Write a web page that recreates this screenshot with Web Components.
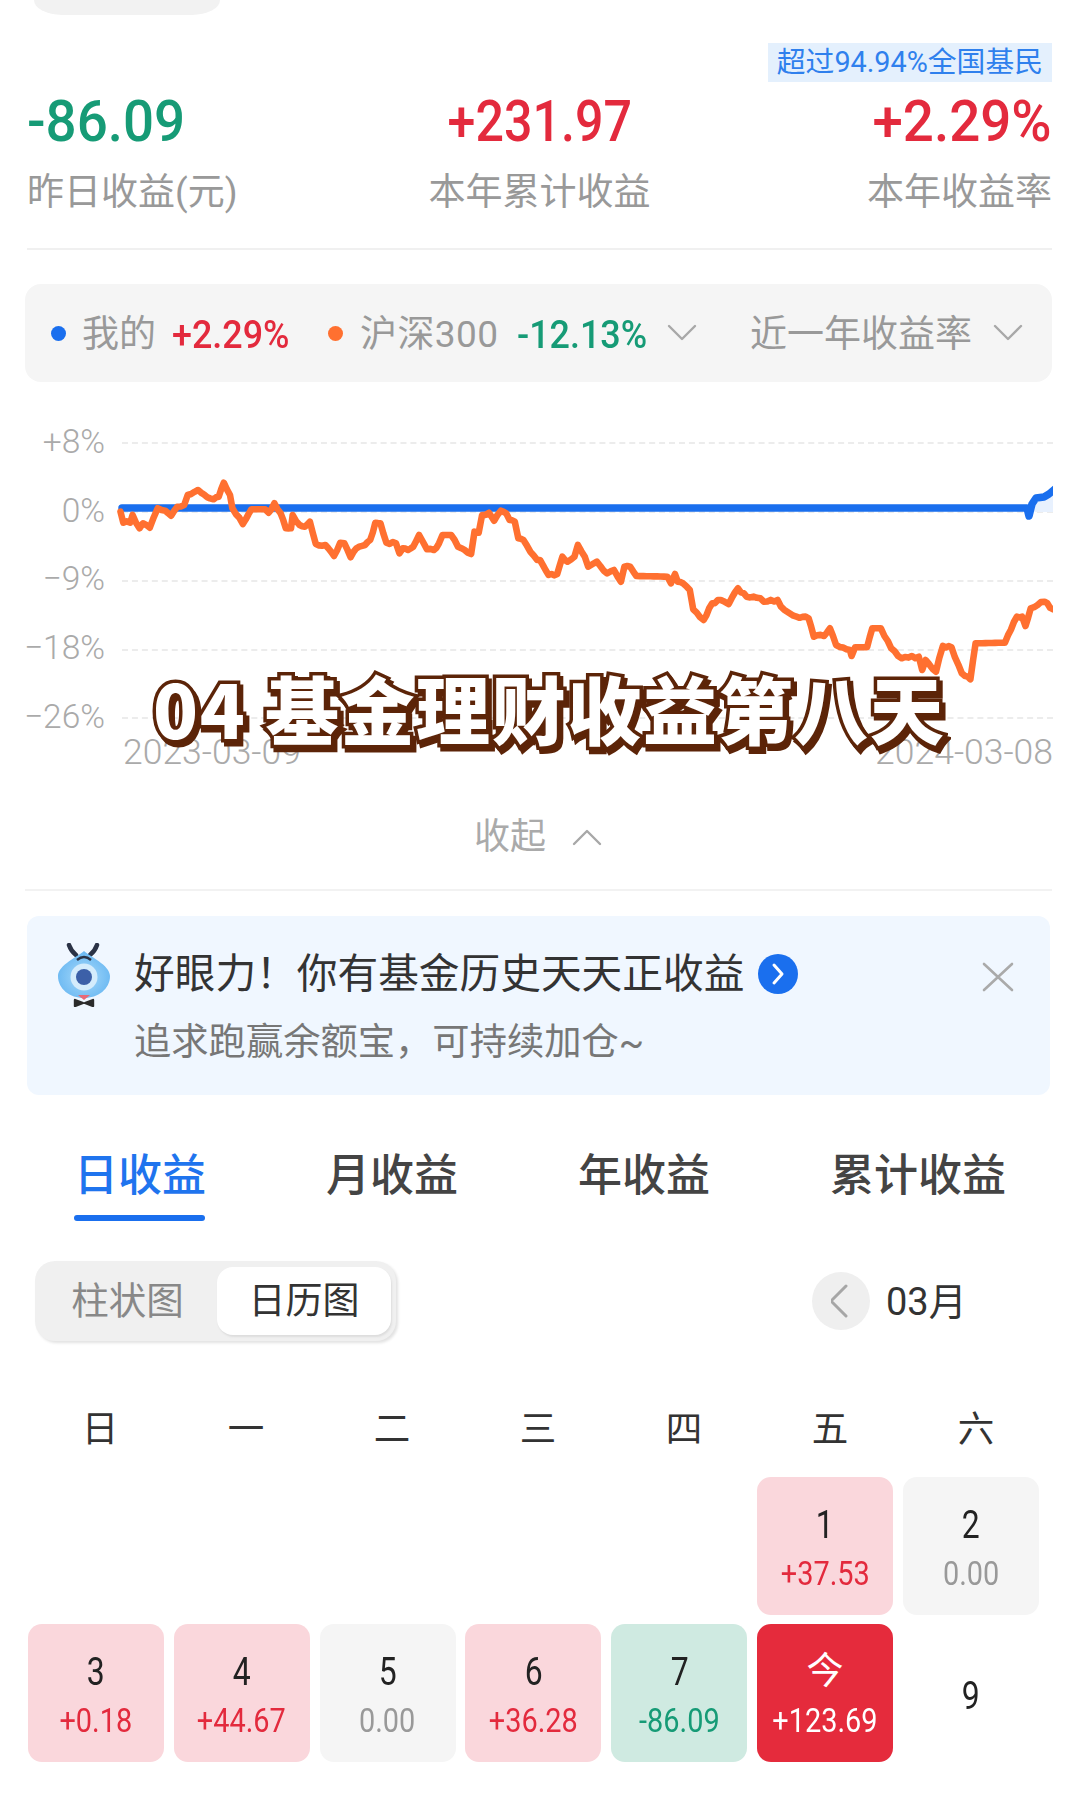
<!DOCTYPE html>
<html lang="zh-CN"><head><meta charset="utf-8"><title>基金理财收益</title>
<style>
html,body{margin:0;padding:0;background:#fff}
body{font-family:Roboto,"Noto Sans CJK SC",sans-serif;width:1080px;height:1800px;overflow:hidden;position:relative}
</style></head><body>
<fund-page></fund-page>
<script>
function def(name,css,html){
  customElements.define(name,class extends HTMLElement{
    connectedCallback(){
      if(this.shadowRoot)return;
      const r=this.attachShadow({mode:'open'});
      r.innerHTML='<style>'+css+'</style>'+(typeof html==='function'?html(this):html);
    }
  });
}
def('top-pill',`:host{display:block;width:186px;height:15px;margin-left:34px;background:#f2f2f2;border-radius:0 0 28px 28px / 0 0 15px 15px}`,'');
def('rank-badge',`:host{display:block;width:max-content;margin-left:auto;height:39px;line-height:39px;padding:0 9px;background:#e4f0fd;color:#2f80ed;font-size:28.8px;white-space:nowrap}`,'<slot></slot>');
def('stat-item',`:host{display:flex;flex-direction:column;align-items:var(--a,flex-start)}
.v{font-size:57px;font-weight:500;line-height:62px;height:62px;white-space:nowrap;transform:scaleX(var(--sx,.9));transform-origin:var(--o,left) center;margin-top:1px}
.l{font-size:37px;line-height:50px;margin-top:15px;color:#999;white-space:nowrap}`,
 e=>`<div class="v" style="color:${e.getAttribute('color')}">${e.getAttribute('value')}</div><div class="l">${e.getAttribute('label')}</div>`);
def('stat-summary',`:host{display:block;padding:28px 28px 0 27px;box-sizing:border-box;height:235px}
.row{display:grid;grid-template-columns:1fr 1fr 1fr;margin-top:8px}
.rule{height:2px;background:#f0f0f0;margin:30px 0 0}`,
`<slot name="badge"></slot><div class="row"><slot></slot></div><div class="rule"></div>`);
const chev=(w,h,up)=>`<svg width="${w}" height="${h}" viewBox="0 0 30 18" fill="none" stroke="#a8a8a8" stroke-width="2.4" stroke-linecap="round" stroke-linejoin="round"><path d="${up?'M2 16 15 3 28 16':'M2 2 15 15 28 2'}"/></svg>`;
def('legend-bar',`:host{display:flex;align-items:center;height:98px;margin:34px 28px 0 25px;background:#f5f5f5;border-radius:16px;font-size:37px;color:#999;white-space:nowrap;position:relative}
.dot{width:15px;height:15px;border-radius:50%;flex:none}
b{font-weight:500;font-size:39px;transform:scaleX(.92);transform-origin:left center;display:block;margin-top:3px}
span{display:block;margin-bottom:4px}
span.ic{margin-bottom:0;display:flex}`,
`<div class="dot" style="background:#1a6fee;margin-left:26px"></div><span style="margin-left:16px;width:72px">我的</span><b style="margin-left:18px;color:#e32a3d;width:117px">+2.29%</b><div class="dot" style="background:#ff7030;margin-left:39px"></div><span style="margin-left:17px;width:140px;letter-spacing:.4px">沪深300</span><b style="margin-left:17px;color:#169b76;width:129px">-12.13%</b><span class="ic" style="margin-left:21px">${chev(30,18)}</span><span style="margin-left:53px;width:223px">近一年收益率</span><span class="ic" style="margin-left:20px">${chev(30,18)}</span>`);
const z2=[[350,335],[358,368],[378,368],[385,345],[405,385],[415,370],[435,383],[458,325],[480,332],[497,347],[515,320],[535,315],[545,285],[575,270],[610,295],[620,298],[635,290],[650,248],[668,285],[675,325],[705,372],[730,328],[770,328],[780,338],[797,310],[815,340],[830,385],[845,385],[850,345],[870,375],[885,380],[900,365],[917,432],[945,435],[970,468],[988,428],[1000,430],[1018,472],[1035,445],[1060,435],[1075,420],[1090,368],[1105,370],[1122,428],[1150,430],[1160,460],[1170,445],[1185,450],[1200,440],[1217,405],[1240,448],[1260,450],[1275,430],[1285,405],[1310,405],[1330,440],[1368,462],[1378,395],[1390,398],[1400,345],[1420,338],[1435,362],[1455,332],[1470,340],[1480,360],[1495,365],[1505,415],[1520,420],[1540,455],[1560,480]];
const z3=[[0,480],[25,525],[50,522],[65,470],[80,485],[100,470],[110,435],[130,470],[140,500],[165,485],[195,520],[215,510],[235,545],[245,500],[262,500],[280,528],[370,530],[380,550],[392,522],[400,545],[415,550],[435,570],[445,628],[475,660],[500,610],[525,600],[548,612],[575,565],[600,590],[640,595],[650,605],[690,600],[700,620],[745,650],[780,655],[795,710],[825,708],[842,685],[860,735],[900,750],[905,768],[915,742],[950,742],[965,685],[990,685],[1020,745],[1050,775],[1100,770],[1110,810],[1120,780],[1150,815],[1170,738],[1195,742],[1225,820],[1250,838],[1265,730],[1350,728],[1385,650],[1400,650],[1410,678],[1425,625],[1465,605],[1490,628]];
const pts=z2.map(p=>[p[0]/2.904,p[1]/3+400]).concat(z3.map(p=>[540+p[0]/2.904,p[1]/3+400]));
/* daily series: fill the sketched points with small deterministic jitter on non-flat stretches */
let seed=7;const rnd=()=>{seed=(seed*16807)%2147483647;return seed/2147483647-.5};
let orange='';
pts.forEach((p,i)=>{
  if(!i){orange='M'+p[0].toFixed(1)+' '+p[1].toFixed(1);return}
  const q=pts[i-1],dx=p[0]-q[0],dy=p[1]-q[1],flat=Math.abs(dy)<Math.abs(dx)*.06&&dx>8;
  const n=Math.max(1,Math.round(dx/3.4));
  for(let k=1;k<=n;k++){
    const t=k/n,j=(flat||k===n)?0:rnd()*2.6;
    orange+='L'+(q[0]+dx*t).toFixed(1)+' '+(q[1]+dy*t+j).toFixed(1);
  }
});
def('grid-row',`:host{display:flex;align-items:center;height:68.75px}
.t{width:105px;text-align:right;font-size:33.5px;line-height:40px;margin-top:-3px;color:#aaa;white-space:nowrap;font-weight:300}
.d{flex:1;margin-left:17px;border-top:2px dashed #ececec}`,
 e=>`<div class="t">${e.getAttribute('label').replace('-','−')}</div><div class="d"></div>`);
def('return-chart',`:host{display:block;position:relative;margin:27px 27px 0 0;height:362px}
.dates{display:flex;justify-content:space-between;margin:-19px 0 0 123px;font-size:35.5px;line-height:36px;color:#aaa;font-weight:300}
svg{position:absolute;left:0;top:0;pointer-events:none}`,
`<slot></slot><div class="dates"><span>2023-03-09</span><span>2024-03-08</span></div>
<svg width="1053" height="380" viewBox="0 409 1053 380" fill="none" stroke-linecap="round" stroke-linejoin="round">
<path d="M1032 503 1053 490V512H1032Z" fill="#e8f1fe"/>
<path d="M122 508H1027L1029 516 1032 504 1036 498 1044 497 1049 494 1056 488" stroke="#1a6fee" stroke-width="7.5"/>
<path d="${orange}" stroke="#ff7030" stroke-width="6.6"/></svg>`);
def('video-caption',`:host{position:absolute;left:153px;top:662px;font-family:"Noto Sans CJK SC",sans-serif;font-weight:900;font-size:74px;line-height:90px;letter-spacing:1.6px;color:#fff;white-space:nowrap;-webkit-text-stroke:7px #5c2408;paint-order:stroke fill;filter:drop-shadow(3px 4px 0 #5c2408);z-index:3}`,'<slot></slot>');
def('collapse-row',`:host{display:flex;justify-content:center;align-items:center;height:60px;margin-top:36px;font-size:36px;color:#aaa;gap:26px}`,`<span style="white-space:nowrap;line-height:60px;margin-left:-4px">收起</span>${chev(30,18,true)}`);
def('thin-rule',`:host{display:block;height:2px;background:#f2f2f2;margin:22px 28px 0 25px}`,'');
def('tip-banner',`:host{display:block;position:relative;height:179px;margin:25px 30px 0 27px;background:#f0f7ff;border-radius:12px}
.c{display:flex;padding:32px 0 0 29px}
.a{font-size:40.7px;line-height:52px;color:#333;display:flex;align-items:center;white-space:nowrap}
.b{font-size:37.3px;line-height:52px;color:#777;margin-top:16px;white-space:nowrap}
.go{width:40px;height:40px;border-radius:50%;background:#1a6fee;margin-left:14px;display:flex;align-items:center;justify-content:center}
.x{position:absolute;right:36px;top:46px;display:flex}`,
`<div class="c"><svg width="56" height="64" viewBox="0 0 56 64" style="flex:none;margin-top:-5px"><defs><radialGradient id="g" cx=".5" cy=".55" r=".55"><stop offset="0" stop-color="#a8dafa"/><stop offset="1" stop-color="#6ab8f2"/></radialGradient></defs>
<path d="M13 2Q15 8 20 12M41 2Q39 8 34 12" stroke="#2b3346" stroke-width="4.5" stroke-linecap="round" fill="none"/>
<path d="M28 8C33 13 54 22 54 33 54 46 42 55 28 55 14 55 2 46 2 33 2 22 23 13 28 8Z" fill="url(#g)"/>
<path d="M21 17Q28 11 35 17" stroke="#2b3346" stroke-width="2.4" fill="none"/>
<circle cx="28" cy="34" r="13.5" fill="#d4ecfc"/><circle cx="28" cy="34" r="8" fill="#3c60a8"/>
<path d="M22 52H34L28 57Z" fill="#e86a78"/>
<path d="M19 57 27 60 19 63ZM37 57 29 60 37 63Z" fill="#2b2b2b" stroke="#2b2b2b" stroke-width="2.4" stroke-linejoin="round"/></svg>
<div style="margin-left:22px"><div class="a">好眼力！你有基金历史天天正收益<span class="go"><svg width="14" height="24" viewBox="0 0 14 24" fill="none" stroke="#fff" stroke-width="3" stroke-linecap="round" stroke-linejoin="round"><path d="M3 3 11 12 3 21"/></svg></span></div><div class="b">追求跑赢余额宝，可持续加仓~</div></div></div>
<span class="x"><svg width="32" height="30" viewBox="0 0 32 30" stroke="#aaa" stroke-width="2.6" stroke-linecap="round"><path d="M2 2 30 28M30 2 2 28"/></svg></span>`);
def('period-tabs',`:host{display:block;height:126px;font-size:44px;font-weight:500;color:#444;position:relative}
.r{display:flex;padding-top:50px;height:62px;line-height:62px;white-space:nowrap}
.r span:nth-child(1){margin-left:74px;color:#1f74ee;width:132px}
.r span:nth-child(2){margin-left:120px;width:132px}
.r span:nth-child(3){margin-left:120px;width:132px}
.r span:nth-child(4){margin-left:120px}
i{display:block;width:131px;height:6px;border-radius:3px;background:#1a6fee;margin:8px 0 0 74px}`,
`<div class="r"><span>日收益</span><span>月收益</span><span>年收益</span><span>累计收益</span></div><i></i>`);
def('view-bar',`:host{display:flex;align-items:center;height:80px;margin-top:40px;position:relative}
.sw{display:flex;align-items:center;width:361px;height:80px;box-sizing:border-box;margin-left:35px;padding:6px 5px 6px 0;background:#f0f0f0;border-radius:20px;box-shadow:2px 2px 3px #e2e2e2;font-size:37.5px;color:#888;white-space:nowrap;line-height:67px}
.sw span{display:block;width:182px;text-align:center;padding-left:3px;box-sizing:border-box}
.sw b{display:block;flex:1;height:100%;font-size:37px;font-weight:400;line-height:69px;text-align:center;background:#fff;border-radius:16px;color:#333;box-shadow:1px 2px 2px #ddd}
.pv{width:58px;height:58px;border-radius:50%;background:#efefef;display:flex;align-items:center;justify-content:center;margin-left:416px}
.m{font-size:38px;color:#333;margin-left:16px;white-space:nowrap;margin-bottom:5px}`,
`<div class="sw"><span>柱状图</span><b>日历图</b></div><div class="pv"><svg width="20" height="34" viewBox="0 0 20 34" fill="none" stroke="#a6a6a6" stroke-width="3" stroke-linecap="round" stroke-linejoin="round"><path d="M17 2 2 17 17 32" transform="translate(-2 0)"/></svg></div><div class="m">03月</div>`);
def('week-head',`:host{display:grid;grid-template-columns:repeat(7,146px);margin:62px 0 0 27px;height:54px;line-height:54px;font-size:36.5px;color:#333;text-align:center}`,
 ['日','一','二','三','四','五','六'].map(d=>`<span>${d}</span>`).join(''));
def('day-cell',`:host{display:flex;flex-direction:column;align-items:center;justify-content:center;height:138px;border-radius:14px;box-sizing:border-box}
.n{font-size:38px;line-height:40px;color:#222;height:40px;margin-top:5px;transform:scaleX(.84)}
.n.cjk{font-size:37px;transform:none}
.v{font-size:34px;line-height:40px;height:40px;margin-top:8px;white-space:nowrap;transform:scaleX(.85)}
:host([tone=up]){background:#fad7dc}:host([tone=up]) .v{color:#e32a3d}
:host([tone=down]){background:#cfeae1}:host([tone=down]) .v{color:#169b76}
:host([tone=flat]){background:#f5f5f5}:host([tone=flat]) .v{color:#999}
:host([tone=today]){background:#e52b3c}:host([tone=today]) .v,:host([tone=today]) .n{color:#fff}`,
 e=>`<div class="n${/\d/.test(e.getAttribute('n'))?'':' cjk'}">${e.getAttribute('n')}</div>`+(e.hasAttribute('v')?`<div class="v">${e.getAttribute('v')}</div>`:''));
def('day-grid',`:host{display:grid;grid-template-columns:repeat(7,136px);grid-auto-rows:138px;column-gap:9.8px;row-gap:9px;margin:20px 0 0 28px}`,'<slot></slot>');
customElements.define('fund-page',class extends HTMLElement{
 connectedCallback(){
  const r=this.attachShadow({mode:'open'});
  r.innerHTML=`<style>:host{display:block;width:1080px;height:1800px;overflow:hidden;position:relative;color:#333}</style>
<top-pill></top-pill>
<stat-summary><rank-badge slot="badge">超过94.94%全国基民</rank-badge>
<stat-item value="-86.09" label="昨日收益(元)" color="#169b76" style="--sx:.96"></stat-item>
<stat-item value="+231.97" label="本年累计收益" color="#e32a3d" style="--a:center;--o:center;--sx:.88"></stat-item>
<stat-item value="+2.29%" label="本年收益率" color="#e32a3d" style="--a:flex-end;--o:right;--sx:.96"></stat-item></stat-summary>
<legend-bar></legend-bar>
<return-chart><grid-row label="+8%"></grid-row><grid-row label="0%"></grid-row><grid-row label="-9%"></grid-row><grid-row label="-18%"></grid-row><grid-row label="-26%"></grid-row></return-chart>
<video-caption>04 基金理财收益第八天</video-caption>
<collapse-row></collapse-row><thin-rule></thin-rule>
<tip-banner></tip-banner><period-tabs></period-tabs><view-bar></view-bar><week-head></week-head>
<day-grid>
<div style="grid-column:1/6"></div>
<day-cell n="1" v="+37.53" tone="up"></day-cell><day-cell n="2" v="0.00" tone="flat"></day-cell>
<day-cell n="3" v="+0.18" tone="up"></day-cell><day-cell n="4" v="+44.67" tone="up"></day-cell><day-cell n="5" v="0.00" tone="flat"></day-cell><day-cell n="6" v="+36.28" tone="up"></day-cell><day-cell n="7" v="-86.09" tone="down"></day-cell><day-cell n="今" v="+123.69" tone="today"></day-cell><day-cell n="9"></day-cell>
</day-grid>`;
 }
});
</script></body></html>
